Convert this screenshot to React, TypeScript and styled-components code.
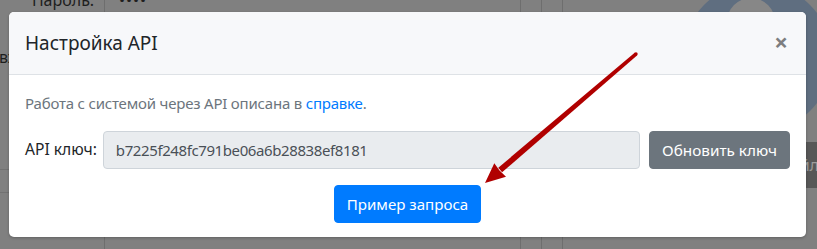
import React from "react";
import styled, { createGlobalStyle } from "styled-components";

const GlobalStyle = createGlobalStyle`
  html, body {
    margin: 0;
    padding: 0;
    width: 817px;
    height: 249px;
    overflow: hidden;
  }
  body {
    font-family: "Noto Sans", "Open Sans", sans-serif;
    font-size: 16px;
    line-height: 1.5;
    color: #212529;
  }
  * {
    box-sizing: border-box;
  }
`;

const Screen = styled.div`
  position: relative;
  width: 817px;
  height: 249px;
  overflow: hidden;
  background: #808080;
`;

/* dimmed page that sits behind the modal */
const Page = styled.div`
  display: flex;
  height: 261px;
  margin-top: -12px;
  color: #1e1e1e;
`;

const Column = styled.div<{ $w?: number; $line?: boolean }>`
  display: flex;
  flex-direction: column;
  width: ${(p) => (p.$w ? `${p.$w}px` : "auto")};
  flex: ${(p) => (p.$w ? "none" : "1")};
  border-right: ${(p) => (p.$line ? "1px solid #6e6e6e" : "none")};
`;

const Cell = styled.div<{ $h: number; $align?: "left" | "right"; $rule?: boolean }>`
  height: ${(p) => p.$h}px;
  line-height: 24px;
  padding: 0 10px 0 0;
  text-align: ${(p) => p.$align || "left"};
  white-space: nowrap;
  overflow: hidden;
  border-bottom: ${(p) => (p.$rule ? "1px solid #727272" : "none")};
`;

const Dots = styled.div`
  height: 24px;
  line-height: 24px;
  padding-left: 14px;
  letter-spacing: 1px;
`;

const Avatar = styled.svg`
  display: block;
  margin-left: 119px;
`;

const GhostButton = styled.div`
  align-self: flex-end;
  margin: 0 -14px 0 0;
  height: 46px;
  line-height: 46px;
  padding: 0 12px;
  background: #575757;
  color: #9c9c9c;
  font-size: 16px;
`;

/* modal */
const Overlay = styled.div`
  position: absolute;
  inset: 0;
  padding: 12px 11px 0 9px;
`;

const Modal = styled.div`
  background: #fff;
  border-radius: 5px;
  box-shadow: 0 1px 3px rgba(0, 0, 0, 0.25);
  overflow: hidden;
`;

const Header = styled.div`
  display: flex;
  align-items: flex-start;
  justify-content: space-between;
  padding: 16px;
  background: #f7f8fa;
  border-bottom: 1px solid #dee2e6;
`;

const Title = styled.h5`
  margin: 0;
  font-size: 19px;
  font-weight: 400;
  line-height: 30px;
  color: #212529;
`;

const Close = styled.button`
  background: none;
  border: 0;
  padding: 0;
  margin: 0 2px 0 0;
  font-family: inherit;
  font-size: 24px;
  font-weight: 700;
  line-height: 28px;
  color: #7d7e80;
  cursor: pointer;
`;

const Body = styled.div`
  padding: 16px 16px 14px;
`;

const Lead = styled.p`
  margin: 0 0 16px;
  font-size: 15px;
  line-height: 24px;
  letter-spacing: -0.2px;
  color: #6c757d;
`;

const Link = styled.a`
  color: #007bff;
  text-decoration: none;
`;

const KeyRow = styled.div`
  display: flex;
  align-items: center;
`;

const KeyLabel = styled.label`
  margin-right: 6px;
  font-size: 15.6px;
  color: #212529;
`;

const KeyInput = styled.input`
  flex: 1;
  min-width: 0;
  height: 38px;
  padding: 6px 12px;
  border: 1px solid #ced4da;
  border-radius: 4px;
  background: #e9ecef;
  color: #495057;
  font-family: inherit;
  font-size: 15px;
  letter-spacing: -0.4px;
  line-height: 24px;
  outline: none;
`;

const Button = styled.button<{ $variant: "primary" | "secondary" }>`
  height: 38px;
  padding: 6px 12px;
  border: 1px solid ${(p) => (p.$variant === "primary" ? "#007bff" : "#6c757d")};
  border-radius: 4px;
  background: ${(p) => (p.$variant === "primary" ? "#007bff" : "#6c757d")};
  color: #fff;
  font-family: inherit;
  font-size: ${(p) => (p.$variant === "primary" ? "15.1px" : "15.3px")};
  line-height: 24px;
  white-space: nowrap;
  cursor: pointer;
`;

const RefreshButton = styled(Button)`
  margin-left: 9px;
`;

const Actions = styled.div`
  display: flex;
  justify-content: center;
  margin-top: 16px;
`;

const ArrowLayer = styled.svg`
  position: absolute;
  inset: 0;
  pointer-events: none;
`;

export default function App() {
  return (
    <>
      <GlobalStyle />
      <Screen>
        <Page>
          <Column $w={105} $line>
            <Cell $h={24} $align="right">Пароль:</Cell>
            <Cell $h={33} />
            <Cell $h={125} $rule>
              <span style={{ marginLeft: -1 }}>вход</span>
            </Cell>
            <Cell $h={23} $rule />
          </Column>
          <Column $w={416} $line>
            <Dots>••••</Dots>
          </Column>
          <Column $w={21} $line />
          <Column $w={21} $line />
          <Column>
            <Avatar width="135" height="154" viewBox="0 0 135 154">
              <circle cx="75" cy="70" r="75" fill="#5f6e80" />
              <circle cx="69" cy="34" r="24" fill="#878787" />
            </Avatar>
            <GhostButton>Файл</GhostButton>
          </Column>
        </Page>

        <Overlay>
          <Modal>
            <Header>
              <Title>Настройка API</Title>
              <Close aria-label="Закрыть">×</Close>
            </Header>
            <Body>
              <Lead>
                Работа с системой через API описана в <Link href="#">справке</Link>.
              </Lead>
              <KeyRow>
                <KeyLabel>API ключ:</KeyLabel>
                <KeyInput readOnly value="b7225f248fc791be06a6b28838ef8181" />
                <RefreshButton $variant="secondary">Обновить ключ</RefreshButton>
              </KeyRow>
              <Actions>
                <Button $variant="primary">Пример запроса</Button>
              </Actions>
            </Body>
          </Modal>
        </Overlay>

        <ArrowLayer width="817" height="249" viewBox="0 0 817 249">
          <polygon
            points="637,55.5 635,52.5 498.3,167.7 502.1,172.3"
            fill="#b00000"
          />
          <circle cx="636" cy="54" r="1.7" fill="#b00000" />
          <polygon
            points="485,183 494.3,163.2 499.5,170.6 506,176.8"
            fill="#b00000"
          />
        </ArrowLayer>
      </Screen>
    </>
  );
}
